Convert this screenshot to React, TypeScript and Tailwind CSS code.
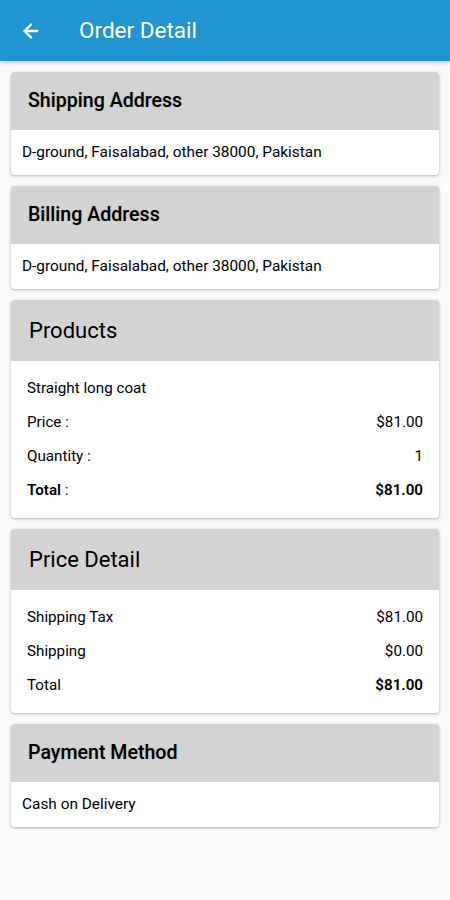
import { ArrowLeft } from "lucide-react";

const font = { fontFamily: "Roboto, 'Noto Sans', sans-serif" };

function AddressCard({ title, text }: { title: string; text: string }) {
  return (
    <div className="overflow-hidden rounded-[4px] bg-white shadow-[0_1px_3px_rgba(0,0,0,0.3)]">
      <div className="flex h-[58px] items-center bg-[#d3d3d3] px-[17px]">
        <h2 className="text-[19.6px] font-medium text-black [text-shadow:0_0_1px_rgba(0,0,0,0.25)]">{title}</h2>
      </div>
      <div className="flex h-[45px] items-center px-[11px] text-[15.4px] text-black">{text}</div>
    </div>
  );
}

function Row({ label, value, bold }: { label: string; value?: string; bold?: boolean }) {
  return (
    <div className="flex h-[34px] items-center justify-between text-[15.2px] text-black">
      <span>
        {bold ? <span className="font-semibold">Total</span> : label}
        {bold && " :"}
      </span>
      {value && <span className={bold ? "font-semibold" : ""}>{value}</span>}
    </div>
  );
}

export default function App() {
  return (
    <div className="min-h-[900px] w-full bg-[#fafafa]" style={font}>
      <header className="flex h-[61px] items-center bg-[#2195d2] shadow-[0_2px_4px_rgba(0,0,0,0.2)]">
        <ArrowLeft className="ml-[20px] h-[22px] w-[22px] text-white" strokeWidth={2.5} />
        <h1 className="ml-[37px] text-[22.5px] text-white">Order Detail</h1>
      </header>

      <main className="flex flex-col gap-[11px] px-[11px] pt-[11px]">
        <AddressCard title="Shipping Address" text="D-ground, Faisalabad, other 38000, Pakistan" />
        <AddressCard title="Billing Address" text="D-ground, Faisalabad, other 38000, Pakistan" />

        <div className="overflow-hidden rounded-[4px] bg-white shadow-[0_1px_3px_rgba(0,0,0,0.3)]">
          <div className="flex h-[61px] items-center bg-[#d3d3d3] px-[18px]">
            <h2 className="text-[22px] text-black">Products</h2>
          </div>
          <div className="px-[16px] pb-[11px] pt-[10px]">
            <Row label="Straight long coat" />
            <Row label="Price :" value="$81.00" />
            <Row label="Quantity :" value="1" />
            <Row label="Total" value="$81.00" bold />
          </div>
        </div>

        <div className="overflow-hidden rounded-[4px] bg-white shadow-[0_1px_3px_rgba(0,0,0,0.3)]">
          <div className="flex h-[61px] items-center bg-[#d3d3d3] px-[18px]">
            <h2 className="text-[22px] text-black">Price Detail</h2>
          </div>
          <div className="px-[16px] pb-[11px] pt-[10px]">
            <Row label="Shipping Tax" value="$81.00" />
            <Row label="Shipping" value="$0.00" />
            <div className="flex h-[34px] items-center justify-between text-[15.2px] text-black">
              <span>Total</span>
              <span className="font-semibold">$81.00</span>
            </div>
          </div>
        </div>

        <AddressCard title="Payment Method" text="Cash on Delivery" />
      </main>
    </div>
  );
}
